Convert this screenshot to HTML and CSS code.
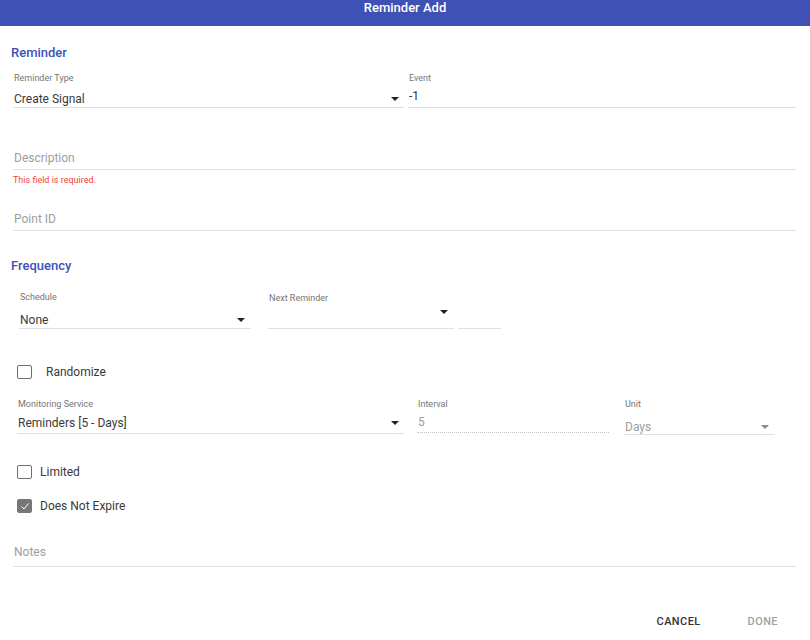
FILE: index.html
```html
<!DOCTYPE html>
<html lang="en">
<head>
  <meta charset="UTF-8">
  <title>Reminder Add</title>
  <link rel="stylesheet" href="styles.css">
</head>
<body>
  <div class="dialog">
    <div class="title-bar">Reminder Add</div>

    <div class="content">
      <h3 class="section first">Reminder</h3>

      <div class="row row-reminder">
        <div class="field">
          <div class="label">Reminder Type</div>
          <div class="input select">
            <span>Create Signal</span>
            <svg class="caret" width="8" height="4" viewBox="0 0 8 4"><polygon points="0,0 8,0 4,4"/></svg>
          </div>
        </div>
        <div class="field">
          <div class="label">Event</div>
          <div class="input text event">-1</div>
        </div>
      </div>

      <div class="input text placeholder desc">Description</div>
      <div class="error">This field is required.</div>

      <div class="input text placeholder point">Point ID</div>

      <h3 class="section freq">Frequency</h3>

      <div class="row row-schedule">
        <div class="field">
          <div class="label">Schedule</div>
          <div class="input select">
            <span>None</span>
            <svg class="caret" width="8" height="4" viewBox="0 0 8 4"><polygon points="0,0 8,0 4,4"/></svg>
          </div>
        </div>
        <div class="field">
          <div class="label next-label">Next Reminder</div>
          <div class="input select next">
            <span></span>
            <svg class="caret top" width="8" height="4" viewBox="0 0 8 4"><polygon points="0,0 8,0 4,4"/></svg>
          </div>
        </div>
        <div class="field time">
          <div class="label">&nbsp;</div>
          <div class="input select"><span></span></div>
        </div>
      </div>

      <label class="check randomize">
        <span class="box"></span>
        <span>Randomize</span>
      </label>

      <div class="row row-service">
        <div class="field">
          <div class="label">Monitoring Service</div>
          <div class="input select service">
            <span>Reminders [5 - Days]</span>
            <svg class="caret" width="8" height="4" viewBox="0 0 8 4"><polygon points="0,0 8,0 4,4"/></svg>
          </div>
        </div>
        <div class="field">
          <div class="label">Interval</div>
          <div class="input text disabled dotted">5</div>
        </div>
        <div class="field">
          <div class="label">Unit</div>
          <div class="input select disabled unit">
            <span>Days</span>
            <svg class="caret" width="8" height="4" viewBox="0 0 8 4"><polygon points="0,0 8,0 4,4"/></svg>
          </div>
        </div>
      </div>

      <label class="check limited">
        <span class="box"></span>
        <span>Limited</span>
      </label>

      <label class="check expire">
        <span class="box checked">
          <svg width="12" height="12" viewBox="0 0 12 12"><polyline points="2.5,6.5 5,9 9.5,3.5" fill="none" stroke="#fff" stroke-width="1"/></svg>
        </span>
        <span>Does Not Expire</span>
      </label>

      <div class="input text placeholder notes">Notes</div>

      <div class="actions">
        <button class="btn">CANCEL</button>
        <button class="btn disabled">DONE</button>
      </div>
    </div>
  </div>
</body>
</html>
```

FILE: styles.css
```css
body {
  margin: 0;
  background-color: #fff;
  font-family: Roboto, "Liberation Sans", sans-serif;
  color: #3a3a3a;
}

.dialog {
  width: 810px;
  height: 640px;
  overflow: hidden;
}

.title-bar {
  height: 26px;
  background-color: #3f51b5;
  color: #fff;
  font-size: 13px;
  font-weight: 500;
  line-height: 15px;
  text-align: center;
}

.content {
  padding: 0 14px 0 13px;
}

.section {
  margin: 27px 0 0 -2px;
  font-size: 13px;
  font-weight: 500;
  line-height: 16px;
  color: #4052b8;
}

.section.first {
  margin-top: 19px;
  margin-bottom: -1px;
}

.row {
  display: grid;
  align-items: start;
}

.row-reminder {
  margin-top: 12px;
  grid-template-columns: 391px 1fr;
  column-gap: 4px;
}

.row-reminder .select {
  padding-top: 4px;
}

.row-schedule {
  margin-top: 17px;
  margin-left: 6px;
  grid-template-columns: 232px 186px 43px;
  column-gap: 17px;
}

.row-schedule .input {
  margin-top: 5px;
}

.row-schedule .input.select {
  padding-top: 4px;
}

.row-schedule .time {
  margin-left: -13px;
  width: 43px;
}

.next-label {
  margin-top: 1px;
  margin-bottom: -1px;
}

.row-service {
  margin-top: 19px;
  margin-left: 4px;
  grid-template-columns: 387px 192px 153px;
  column-gap: 13px;
}

.row-service .field:last-child {
  margin-left: 2px;
}

.label {
  font-size: 9px;
  line-height: 12px;
  color: #757575;
  padding-left: 1px;
}

.input {
  font-size: 12px;
  line-height: 16px;
  height: 16px;
  border-bottom: 1px solid #e0e0e0;
  padding-left: 1px;
  margin-top: 4px;
}

.input.select {
  display: flex;
  align-items: center;
  justify-content: space-between;
  padding-top: 3px;
}

.input.text {
  padding-bottom: 3px;
}

.caret {
  fill: #222;
  margin-right: 5px;
  flex-shrink: 0;
}

.caret.top {
  align-self: flex-start;
  margin-top: -2px;
  margin-right: 2px;
}

.row-schedule .caret {
  margin-right: 6px;
}

.input.service {
  padding-top: 1px;
  padding-bottom: 2px;
}

.input.event {
  padding-bottom: 4px;
  height: 15px;
  color: #333;
}

.placeholder {
  color: #9e9e9e;
}

.disabled {
  color: #9e9e9e;
}

.disabled .caret {
  fill: #8a8a8a;
}

.input.dotted {
  border-bottom: 1px dotted #c4c4c4;
  padding-bottom: 3px;
  height: 15px;
}

.input.unit {
  padding-top: 5px;
  height: 15px;
}

.unit .caret {
  margin-right: 6px;
}

.input.desc,
.input.point {
  height: 17px;
  line-height: 18px;
}

.desc {
  margin-top: 41px;
}

.error {
  margin-top: 4px;
  font-size: 9px;
  line-height: 12px;
  color: #f44336;
}

.point {
  margin-top: 24px;
}

.check {
  display: flex;
  align-items: center;
  margin-left: 4px;
  font-size: 12px;
  line-height: 14px;
}

.box {
  box-sizing: border-box;
  width: 15px;
  height: 14px;
  border: 1px solid #6d6d6d;
  border-radius: 2px;
  margin-right: 8px;
  display: flex;
  align-items: center;
  justify-content: center;
}

.box.checked {
  background-color: #777;
  border-color: #777;
}

.randomize {
  margin-top: 36px;
}

.randomize .box {
  margin-right: 14px;
}

.limited {
  margin-top: 30px;
}

.expire {
  margin-top: 20px;
}

.input.notes {
  margin-top: 31px;
  padding-bottom: 6px;
}

.actions {
  display: flex;
  justify-content: flex-end;
  margin-top: 47px;
  padding-right: 2px;
}

.btn {
  background: none;
  border: none;
  font-family: Roboto, "Liberation Sans", sans-serif;
  font-size: 11px;
  font-weight: 500;
  letter-spacing: 0.4px;
  line-height: 16px;
  color: #333;
  padding: 0 16px;
  cursor: pointer;
}

.btn + .btn {
  margin-left: 15px;
}

.btn.disabled {
  color: #a0a0a0;
}
```
